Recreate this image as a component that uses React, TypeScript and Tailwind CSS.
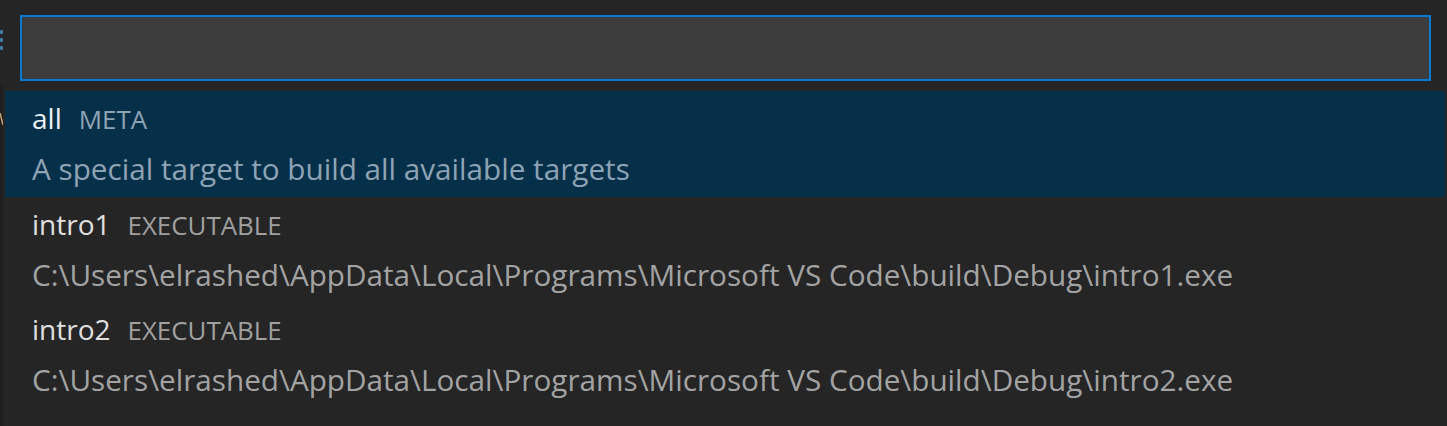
import React from "react";

type Item = {
  label: string;
  desc: string;
  detail: string;
  selected?: boolean;
  h: string;
};

const items: Item[] = [
  {
    label: "all",
    desc: "META",
    detail: "A special target to build all available targets",
    selected: true,
    h: "h-[106px]",
  },
  {
    label: "intro1",
    desc: "EXECUTABLE",
    detail: "C:\\Users\\elrashed\\AppData\\Local\\Programs\\Microsoft VS Code\\build\\Debug\\intro1.exe",
    h: "h-[105px]",
  },
  {
    label: "intro2",
    desc: "EXECUTABLE",
    detail: "C:\\Users\\elrashed\\AppData\\Local\\Programs\\Microsoft VS Code\\build\\Debug\\intro2.exe",
    h: "h-[105px]",
  },
];

function Row({ item }: { item: Item }) {
  const sel = !!item.selected;
  return (
    <div
      className={`${item.h} flex flex-col pl-[27px] whitespace-nowrap ${
        sel ? "bg-[#062f4a]" : ""
      }`}
    >
      <div className="h-[54px] leading-[54px] text-[28px]">
        <span className={sel ? "text-[#eef2f5]" : "text-[#e0e0e0]"}>{item.label}</span>
        <span
          className={`ml-[17px] text-[25.9px] ${sel ? "text-[#8ea3b3]" : "text-[#a0a0a0]"}`}
        >
          {item.desc}
        </span>
      </div>
      <div
        className={`h-[47px] leading-[47px] text-[29.7px] ${
          sel ? "text-[#8ea3b3]" : "text-[#a3a3a3]"
        }`}
      >
        {item.detail}
      </div>
    </div>
  );
}

export default function App() {
  return (
    <div className="flex w-[1447px] h-[426px] overflow-hidden bg-[#252526] font-['Open_Sans',sans-serif]">
      <div className="w-[3px] flex flex-col shrink-0">
        <div className="h-[85px] bg-[#252526] pt-[30px]">
          <svg width="3" height="24" viewBox="0 0 3 24" className="block">
            <rect x="0" y="0" width="3" height="4" rx="1" fill="#3f7fa8" />
            <rect x="0" y="8" width="3" height="4" rx="1" fill="#3f7fa8" />
            <rect x="0" y="16" width="3" height="4" rx="1" fill="#3f7fa8" />
          </svg>
        </div>
        <div className="flex-1 bg-[#1e1e1e] pt-[28px]">
          <svg width="3" height="12" viewBox="0 0 3 12" className="block">
            <path d="M0 0 L3 12" stroke="#c8a77a" strokeWidth="1.5" />
          </svg>
        </div>
      </div>
      <div className="flex-1 flex flex-col px-[2px]">
        <div className="mt-[15px] ml-[15px] mr-[14px] h-[66px] shrink-0 border-2 border-[#0a7ad0] bg-[#3c3c3c]" />
        <div className="mt-[10px] flex flex-col">
          {items.map((it) => (
            <Row key={it.label} item={it} />
          ))}
        </div>
      </div>
    </div>
  );
}
